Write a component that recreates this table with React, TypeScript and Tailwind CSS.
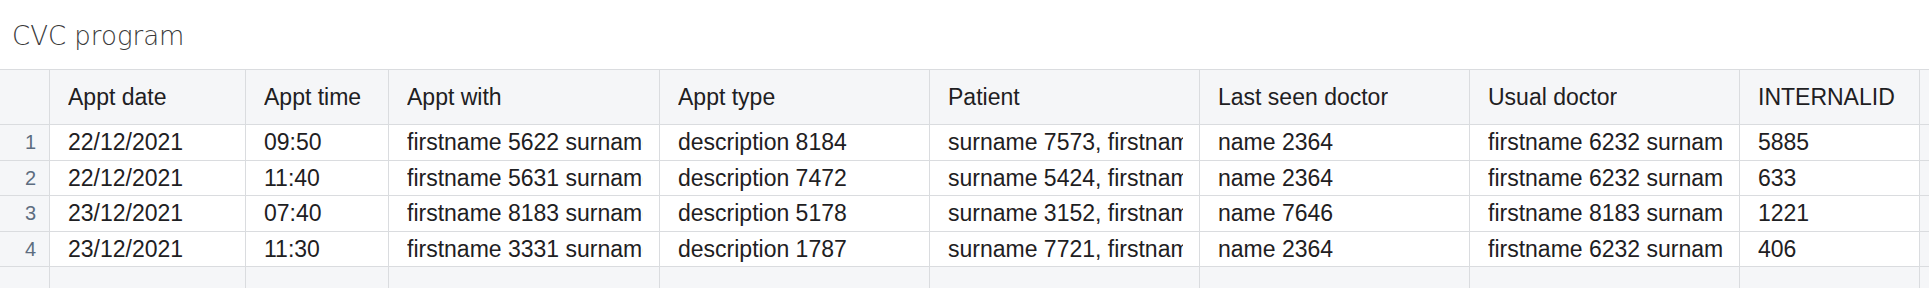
import React from "react";

type Appt = {
  date: string;
  time: string;
  withWho: string;
  type: string;
  patient: string;
  lastSeen: string;
  usual: string;
  internalId: string;
};

const rows: Appt[] = [
  {
    date: "22/12/2021",
    time: "09:50",
    withWho: "firstname 5622 surname 5622",
    type: "description 8184",
    patient: "surname 7573, firstname 7573",
    lastSeen: "name 2364",
    usual: "firstname 6232 surname 6232",
    internalId: "5885",
  },
  {
    date: "22/12/2021",
    time: "11:40",
    withWho: "firstname 5631 surname 5631",
    type: "description 7472",
    patient: "surname 5424, firstname 5424",
    lastSeen: "name 2364",
    usual: "firstname 6232 surname 6232",
    internalId: "633",
  },
  {
    date: "23/12/2021",
    time: "07:40",
    withWho: "firstname 8183 surname 8183",
    type: "description 5178",
    patient: "surname 3152, firstname 3152",
    lastSeen: "name 7646",
    usual: "firstname 8183 surname 8183",
    internalId: "1221",
  },
  {
    date: "23/12/2021",
    time: "11:30",
    withWho: "firstname 3331 surname 3331",
    type: "description 1787",
    patient: "surname 7721, firstname 7721",
    lastSeen: "name 2364",
    usual: "firstname 6232 surname 6232",
    internalId: "406",
  },
];

const headers = [
  "Appt date",
  "Appt time",
  "Appt with",
  "Appt type",
  "Patient",
  "Last seen doctor",
  "Usual doctor",
  "INTERNALID",
];

const Cell = ({ children, head }: { children?: React.ReactNode; head?: boolean }) => (
  <div
    className={`flex min-w-0 items-center overflow-hidden whitespace-nowrap border-r border-b border-[#dadcdf] pl-[18px] pr-[16px] text-[23px] text-[#1e2022] ${
      head ? "bg-[#f5f6f8]" : "bg-white"
    }`}
  >
    <span className="block min-w-0 overflow-hidden">{children}</span>
  </div>
);

const RowNum = ({ n }: { n?: number }) => (
  <div className="flex items-center justify-end border-r border-b border-[#dadcdf] bg-[#f5f6f8] pr-[13px] text-[20px] text-[#5d6d80]">
    {n}
  </div>
);

const Filler = () => <div className="border-b border-[#dadcdf] bg-[#f5f6f8]" />;

export default function App() {
  return (
    <div
      className="h-[288px] w-[1929px] overflow-hidden bg-white"
      style={{ fontFamily: '"Liberation Sans", Arial, sans-serif' }}
    >
      <div className="flex h-[69px] items-center px-[12px] pt-[3px]">
        <h2
          className="text-[26px] font-extralight text-[#3a3a3a]"
          style={{ fontFamily: '"DejaVu Sans", sans-serif' }}
        >
          CVC program
        </h2>
      </div>

      <div className="border-t border-[#dadcdf]">
        <div className="grid grid-cols-[50px_196px_143px_271px_270px_270px_270px_270px_180px_1fr] grid-rows-[55px_35.5px_35.5px_35.5px_35.5px_35.5px]">
          {/* header */}
          <RowNum />
          {headers.map((h) => (
            <Cell key={h} head>
              {h}
            </Cell>
          ))}
          <Filler />

          {rows.map((r, i) => (
            <React.Fragment key={i}>
              <RowNum n={i + 1} />
              <Cell>{r.date}</Cell>
              <Cell>{r.time}</Cell>
              <Cell>{r.withWho}</Cell>
              <Cell>{r.type}</Cell>
              <Cell>{r.patient}</Cell>
              <Cell>{r.lastSeen}</Cell>
              <Cell>{r.usual}</Cell>
              <Cell>{r.internalId}</Cell>
              <Filler />
            </React.Fragment>
          ))}

          {/* empty bottom row */}
          <RowNum />
          {headers.map((h) => (
            <Cell key={h} head />
          ))}
          <Filler />
        </div>
      </div>
    </div>
  );
}
